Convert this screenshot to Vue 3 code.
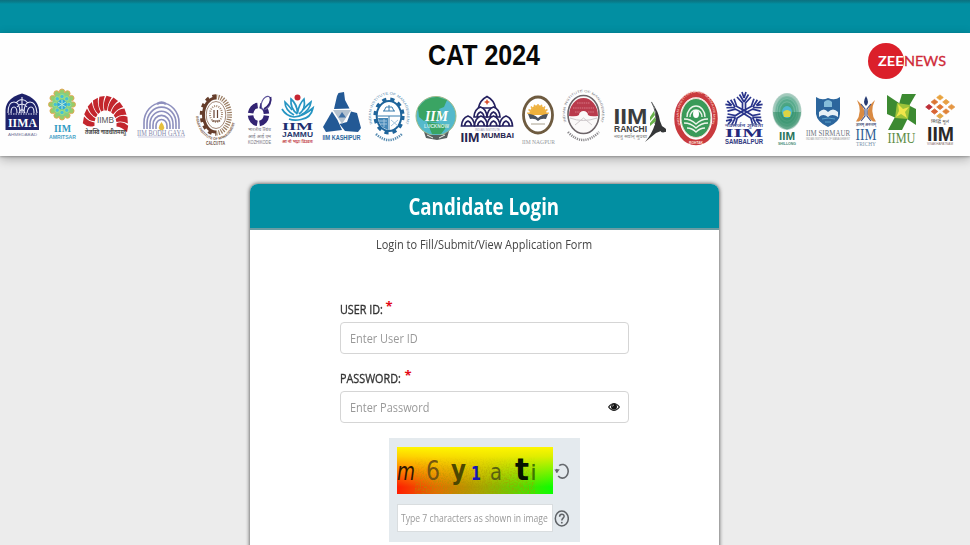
<template>
  <div class="page">
    <div class="topbar"></div>

    <header class="banner">
      <h1 class="exam">
        <svg width="114" height="38" viewBox="427 36 114 38">
          <text x="428" y="65" textLength="112" lengthAdjust="spacingAndGlyphs">CAT 2024</text>
        </svg>
      </h1>

      <svg class="zee" width="82" height="38" viewBox="866 42 82 38">
        <circle cx="886" cy="61" r="18" fill="#db1f2a" />
        <text x="878" y="66" textLength="25.500" lengthAdjust="spacingAndGlyphs" fill="#fff" font-weight="700">ZEE</text>
        <text x="904" y="66" textLength="42" lengthAdjust="spacingAndGlyphs" fill="#cf2a38" stroke="#cf2a38" stroke-width=".3">NEWS</text>
      </svg>

      <svg class="logos" width="970" height="66" viewBox="0 88 970 66">
        <defs>
          <path id="arc-calcutta" d="M196 116 C198 148 234 148 236 116" />
          <path id="arc-emblem" d="M372.500 124 A18 21 0 1 1 405.500 124" />
          <path id="arc-raipur" d="M566.500 122 A18.500 21.500 0 1 1 600.500 122" />
          <path id="arc-rohtak" d="M680.500 125 A17.300 22.300 0 1 1 711.500 125" />
          <radialGradient id="glow"><stop stop-color="#2f9a72" /><stop offset=".7" stop-color="#5fae92" /><stop offset="1" stop-color="#b9d3ca" /></radialGradient>
        </defs>

        <!-- Ahmedabad -->
        <path d="M5.500 130V110Q6 98 22 93.500Q38 98 39 110V130Z" fill="#1d2169" />
        <g fill="none" stroke="#e9ebf7" stroke-width="1.100">
          <path d="M8 113Q8 102 14 102T20 113M24 113Q24 102 30 102T37 113M16 103Q22 96 28 103M11 113Q11 107 14 107T17 113M27 113Q28 107 31 107T34 113M22 97V113M17 107Q22 101 27 107M19 113Q22 106 25 113" />
          <path d="M8 114H37" stroke-dasharray="1.500 1" />
        </g>

        <!-- Amritsar -->
        <circle v-for="p in ring(62, 104.5, 10.8, 12.8, 12)" :key="'a' + p.a" :cx="p.x" :cy="p.y" r="2.700" fill="#9acb68" stroke="#e7a653" stroke-width=".9" />
        <ellipse cx="62" cy="104.500" rx="10" ry="12" fill="#82cf85" />
        <circle v-for="p in ring(62, 104.5, 6.7, 8, 8)" :key="'b' + p.a" :cx="p.x" :cy="p.y" r="2.200" fill="#45c1d5" stroke="#bfe56a" stroke-width=".7" />
        <circle cx="62" cy="104.500" r="4.800" fill="#2fa8d8" />
        <path d="M62 100V109M58 102L66 107M66 102L58 107" stroke="#b6ead4" stroke-width="1" />

        <!-- Bangalore -->
        <g fill="#c3262d" transform="translate(0 -33) scale(1 1.270)">
          <path v-for="a in fan" :key="a" d="M94.500 125Q88.500 127 82.800 123L84 117.800Q89 122 94.500 122.400Z" :transform="`rotate(${a} 105.5 124)`" />
        </g>

        <!-- Bodh Gaya -->
        <g fill="none" stroke="#8d8fbd" stroke-width="1.600">
          <path v-for="r in [5.5, 8.5, 11.5, 14.5, 17.5]" :key="r" :d="`M${161.5 - r} 129 V${127 - r * 0.25} A${r} ${r * 1.12} 0 0 1 ${161.5 + r} ${127 - r * 0.25} V129`" />
          <path d="M157 104Q161.500 101 166 104" stroke-width="2.500" />
        </g>
        <path d="M161.500 122Q167 129 161.500 130.500Q156 129 161.500 122Z" fill="#e5bf3e" />
        <path d="M138 137H185" stroke="#a9aacc" stroke-width=".6" />

        <!-- Calcutta -->
        <g fill="none">
          <path d="M216 98A12.500 17 0 0 0 216 132" stroke="#653d2b" stroke-width="3" />
          <path d="M216 96A14.500 19 0 0 0 216 134" stroke="#653d2b" stroke-width="3.500" stroke-dasharray="3.700 3.700" />
          <path d="M216 97A13.500 18 0 0 1 216 133" stroke="#9a7d63" stroke-width="5" stroke-dasharray="1.200 1.200" />
          <ellipse cx="216" cy="115" rx="9.800" ry="13.500" stroke="#8b6a54" stroke-width=".8" />
          <ellipse cx="216" cy="114" rx="6" ry="8" stroke="#a68a74" stroke-width="2" stroke-dasharray="1 1.200" />
          <path d="M214 110V118M217.500 110V118M212 121H220" stroke="#694434" stroke-width="1.200" />
        </g>
        <text font-size="3.700" fill="#775747" font-weight="700"><textPath href="#arc-calcutta" textLength="62" lengthAdjust="spacingAndGlyphs">INDIAN INSTITUTE OF MANAGEMENT</textPath></text>

        <!-- Kozhikode -->
        <ellipse cx="258.500" cy="114.500" rx="8" ry="9" fill="none" stroke="#332473" stroke-width="5.500" stroke-dasharray="11 2.350" stroke-dashoffset="-1.200" />
        <ellipse cx="266" cy="103" rx="4.200" ry="7" fill="#fff" stroke="#5e559a" stroke-width="1.100" transform="rotate(24 266 103)" />
        <path d="M270.500 97Q272 104 264 109" fill="none" stroke="#332473" stroke-width="1.800" />

        <!-- Jammu -->
        <circle cx="297.500" cy="97.500" r="3" fill="#c72632" />
        <g fill="none" stroke="#2695c2" stroke-width="1.700">
          <path d="M297.500 114Q290 109 291 99Q297 104 297.500 113Q299 104 304 99Q306 109 299 114" />
          <path d="M294 115Q285 110 285 102Q290 107 292 110M301 115Q310 110 311 102Q305 107 303 110" />
          <path d="M282 109Q286 116 294 117Q304 116 313 108Q311 118 301 119.500Q294 121 289 119" />
        </g>

        <!-- Kashipur -->
        <g fill="#235995">
          <path d="M337 96L338.500 93L344 92L345 100L349.500 108.500L334 109Z" />
          <path d="M332 111.500L337.500 120L342 130L326 132L323 127Z" />
          <path d="M351 111.500L357 113L361 128L358 132L345 131L339.500 124L347 122Z" />
        </g>
        <path d="M333 110H351L342 124Z" fill="#b4c2cf" />
        <path d="M338.500 117.500L342 112L346 117.500Z" fill="#3f70a5" />

        <!-- Gear emblem -->
        <ellipse cx="389" cy="116" rx="12.300" ry="15" fill="#fff" stroke="#1f659b" stroke-width="2" />
        <ellipse cx="389" cy="116" rx="13.900" ry="16.800" fill="none" stroke="#1f659b" stroke-width="3.400" stroke-dasharray="4.100 4.050" />
        <path d="M377 116H401M389 116V130M383 111H395M389 105V111M386 107L392 107M384 111L386 107M394 111L392 107" fill="none" stroke="#387cae" stroke-width="1" />
        <path d="M378 118H388V130Q379 127 378 118Z" fill="#4587b7" />
        <path d="M379 121H387M380 124H387M384 119V127M391 120L398 126M398 120L391 126" stroke="#a3c5de" stroke-width="1" />
        <text font-size="3.500" fill="#548ab0"><textPath href="#arc-emblem" textLength="78" lengthAdjust="spacingAndGlyphs">INDIAN INSTITUTE OF MANAGEMENT</textPath></text>
        <path d="M376 134Q389 146 402 134" fill="none" stroke="#548ab0" stroke-width="2.500" stroke-dasharray="1.300 1" />

        <!-- Lucknow -->
        <ellipse cx="436" cy="116" rx="20" ry="19.500" fill="#54b9cb" stroke="#a0b983" stroke-width="1" />
        <path d="M418 108Q426 96 438 97L447 100L444 107L439 109L443 116L436 122L424 121L419 117ZM427 122L448 125L441 134L432 134Z" fill="#3aa463" />
        <path d="M424 132L430 135H443L449 131L447 138L437 140L426 138Z" fill="#596160" />
        <path d="M427 135L433 138M445 135L439 138" stroke="#edf1ed" stroke-width="1" />

        <!-- Mumbai -->
        <g fill="#fff" stroke="#25215f" stroke-width="1.700">
          <path d="M478.500 108Q480 100 487 96.500Q494 100 495.500 108Z" />
          <path v-for="p in scales" :key="p.x + '-' + p.y" :d="`M${p.x - 6.5} ${p.y}Q${p.x - 6} ${p.y - 8} ${p.x} ${p.y - 10}Q${p.x + 6} ${p.y - 8} ${p.x + 6.5} ${p.y}ZM${p.x - 3.5} ${p.y}Q${p.x - 3} ${p.y - 4} ${p.x} ${p.y - 5}Q${p.x + 3} ${p.y - 4} ${p.x + 3.5} ${p.y}`" />
        </g>
        <path d="M487 99L488 101L490 102L488 103L487 105L486 103L484 102L486 101Z" fill="#d95230" />

        <!-- Nagpur -->
        <ellipse cx="538" cy="115" rx="14.500" ry="18" fill="#fff" stroke="#6e5b40" stroke-width="2.800" />
        <path d="M529 115A9 10 0 0 1 547 115Z" fill="#eeb13d" />
        <g stroke="#f0b54a" stroke-width="1.500">
          <path v-for="a in rays" :key="a" d="M527 115H530.500" :transform="`rotate(${a} 538 115)`" />
        </g>
        <path d="M528 114Q534 114 538 118Q542 114 548 114L546 119Q541 118 538 121Q535 118 530 119Z" fill="#4c535f" />
        <path d="M531 124H545" stroke="#a8a08d" stroke-width="1" />

        <!-- Raipur -->
        <ellipse cx="583.500" cy="114.500" rx="15.500" ry="19" fill="#fbf9f9" stroke="#6c6468" stroke-width="1.600" />
        <path d="M569 116A14.500 18 0 0 1 598 116Q590 117 588 115A4.500 4 0 0 0 579 115Q577 117 569 116Z" fill="#b93a4c" />
        <path d="M573 108H594M575 112H580M588 112H594M577 103H590" stroke="#de8995" stroke-width=".8" stroke-dasharray="1.500 .7" />
        <path d="M570 118Q583 123 597 118M575 125L583.500 118L592 125" fill="none" stroke="#cfc9cc" stroke-width="1" />
        <text font-size="3.300" fill="#77777b"><textPath href="#arc-raipur" textLength="80" lengthAdjust="spacingAndGlyphs">INDIAN INSTITUTE OF MANAGEMENT</textPath></text>
        <path d="M568 132Q583 148 599 132" fill="none" stroke="#8a888c" stroke-width="2.500" stroke-dasharray="1.200 1" />

        <!-- Ranchi -->
        <path d="M651 101Q658 112 655 124Q652 134 645 142L656 133L661 131L666 132V129L662 126L660 121Q659 112 651 101Z" fill="#353738" />
        <path d="M651 101Q658 112 655 124L647 138Q654 122 651 101Z" fill="#fff" />
        <path d="M651.500 102Q657.500 113 655 124" fill="none" stroke="#353738" stroke-width=".8" />
        <circle cx="663" cy="130" r="2.500" fill="#353738" />
        <path d="M654 111L650 117V121L655 115ZM655 117L650 123V126L656 121Z" fill="#68b24a" />

        <!-- Rohtak -->
        <ellipse cx="696" cy="118.500" rx="19" ry="24" fill="#fff" stroke="#c93a3e" stroke-width="5.500" />
        <ellipse cx="696" cy="118" rx="15" ry="19.500" fill="#3a9a59" stroke="#f0d9cd" stroke-width="1" />
        <g fill="none" stroke="#edf5ec" stroke-width="1.400">
          <path d="M687 117A9 11 0 0 1 705 117M690 117A6 7 0 0 1 702 117" />
          <path d="M684 119Q691 119 696 124Q701 119 708 119M684 123Q691 123 696 128Q701 123 708 123M687 128Q692 128 696 132Q700 128 705 128" />
        </g>
        <ellipse cx="696" cy="114" rx="3" ry="4" fill="#fff" />
        <text font-size="3" fill="#f0b0a8" font-weight="700"><textPath href="#arc-rohtak" textLength="84" lengthAdjust="spacingAndGlyphs">INDIAN INSTITUTE OF MANAGEMENT</textPath></text>

        <!-- Sambalpur -->
        <g fill="none" stroke="#29348b" stroke-width="1.700">
          <g v-for="a in [0, 62, 122, 238, 298]" :key="a" :transform="`translate(744 112) rotate(${a})`">
            <path d="M-1.500 0V-9L-7 -15M1.500 0V-9L7 -15M0 -10L-4.500 -17.500M0 -10L4.500 -17.500M0 -14L-2 -20M0 -14L2 -20" />
          </g>
        </g>

        <!-- Shillong -->
        <ellipse cx="787" cy="111.500" rx="14.500" ry="18.500" fill="url(#glow)" />
        <g fill="none" stroke="#cde2da" stroke-width=".3">
          <ellipse v-for="r in [7.5, 10, 12.5]" :key="r" cx="787" cy="111.500" :rx="r" :ry="r * 1.3" />
        </g>
        <path d="M773 112H801Q800 126 787 129.500Q774 126 773 112Z" fill="#2d8b62" opacity=".55" />
        <ellipse cx="787" cy="112" rx="5" ry="6" fill="#50b9cf" />
        <path d="M783 112Q787 108 791 112L790 117H784Z" fill="#ddd343" />

        <!-- Sirmaur -->
        <path d="M816 97Q822 101 828 98Q835 101 840 97V114Q840 122 828 127Q817 122 816 114Z" fill="#2c669d" />
        <path d="M824 102Q828 98 832 102V107H824Z" fill="#85bdda" />
        <path d="M819 112Q824 107 828 112Q833 107 838 112V117Q832 113 828 117Q823 113 819 117Z" fill="#e7f1f6" />
        <path d="M822 119Q828 117 835 119M825 122H831" fill="none" stroke="#5aa1c9" />

        <!-- Tiruchirappalli -->
        <path d="M866 96Q870 103 866 106Q862 103 866 96Z" fill="#263b72" />
        <path d="M857 100Q865 107 864.500 114Q863 119 859 121.500H856Q863 112 857 100ZM875 100Q867 107 867.500 114Q869 119 873 121.500H876Q869 112 875 100Z" fill="#d98a42" />
        <path d="M861 104L865 109V116L861 121M871 104L867 109V116L871 121" fill="none" stroke="#3e4f84" stroke-width="1.100" />

        <!-- Udaipur -->
        <g fill="#3c8a31">
          <path d="M899 104L902 94H916L909 106Z" />
          <path d="M887 95L899 103L896 118L887 114Z" />
          <path d="M908 105L916 109V125L907 119Z" />
          <path d="M895 117L908 118L902 130H888Z" />
        </g>
        <path d="M897 103L910 105L908 119L895 118Z" fill="#9cc43a" />
        <path d="M898 104L903 109L909 107L905 112L907 118L901 114L896 117L899 111Z" fill="#f0e64a" />

        <!-- Visakhapatnam -->
        <path v-for="d in diamonds" :key="d.x + '-' + d.y" :d="`M${d.x - 3.3} ${d.y}L${d.x} ${d.y - 2.6}L${d.x + 3.3} ${d.y}L${d.x} ${d.y + 2.6}Z`" :fill="d.c" :stroke="d.c" stroke-width=".8" stroke-linejoin="round" />

        <text
          v-for="(l, i) in labels"
          :key="i"
          :x="l.x"
          :y="l.y"
          :textLength="l.w"
          :font-size="l.s"
          :fill="l.c"
          :font-weight="l.b ? 700 : 400"
          :class="l.f"
          lengthAdjust="spacingAndGlyphs"
        >{{ l.t }}</text>
      </svg>
    </header>

    <main class="panel">
      <h2 class="panel-title"><span>Candidate Login</span></h2>
      <p class="lead"><span>Login to Fill/Submit/View Application Form</span></p>

      <form class="form" @submit.prevent>
        <label class="label"><span>USER ID:</span><b>*</b></label>
        <div class="field"><input v-model="userId" type="text" placeholder="Enter User ID" /></div>

        <label class="label"><span class="pw">PASSWORD:</span><b>*</b></label>
        <div class="field">
          <input v-model="password" :type="visible ? 'text' : 'password'" placeholder="Enter Password" />
          <svg class="eye" width="12" height="10" viewBox="0 0 12 10" @click="visible = !visible">
            <path d="M.6 5Q6-2 11.400 5Q6 12 .6 5Z" fill="#fff" stroke="#222" stroke-width="1.200" />
            <circle cx="6" cy="4.700" r="3" fill="#151515" />
            <path d="M4.500 4.500Q4.500 3 6 3" fill="none" stroke="#bbb" stroke-width=".8" />
          </svg>
        </div>

        <div class="captcha">
          <svg class="captcha-image" width="156" height="47" viewBox="0 0 156 47">
            <defs>
              <linearGradient id="base"><stop stop-color="#ff1e00" /><stop offset=".25" stop-color="#e56c00" /><stop offset=".55" stop-color="#a5a800" /><stop offset=".8" stop-color="#55dc00" /><stop offset="1" stop-color="#0cff00" /></linearGradient>
              <linearGradient id="sun" x2="0" y2="1"><stop stop-color="#fff600" /><stop offset=".2" stop-color="#ffee00" stop-opacity=".85" /><stop offset=".85" stop-color="#ffe600" stop-opacity="0" /></linearGradient>
              <filter id="grain" x="0" y="0" width="100%" height="100%">
                <feTurbulence type="fractalNoise" baseFrequency=".65" numOctaves="2" seed="4" />
                <feColorMatrix values="0 0 0 0 .4  0 0 0 0 .3  0 0 0 0 0  3.500 0 0 0 -1.500" />
              </filter>
              <linearGradient id="fade" x2="0" y2="1"><stop offset=".2" stop-color="#000" /><stop offset=".7" stop-color="#fff" /></linearGradient>
              <mask id="low"><rect width="156" height="47" fill="url(#fade)" /></mask>
            </defs>
            <rect width="156" height="47" fill="url(#base)" />
            <rect width="156" height="47" fill="url(#sun)" />
            <g mask="url(#low)"><rect x="18" width="120" height="47" filter="url(#grain)" opacity=".5" /></g>
            <text
              v-for="g in glyphs"
              :key="g.t"
              :x="g.x"
              :y="g.y"
              :textLength="g.w"
              :font-size="g.s"
              :fill="g.c"
              :font-weight="g.b ? 700 : 400"
              :font-style="g.i ? 'italic' : 'normal'"
              lengthAdjust="spacingAndGlyphs"
            >{{ g.t }}</text>
          </svg>
          <svg width="16" height="18" viewBox="0 0 16 18">
            <path d="M6.200 3.600A5.800 6.800 0 1 1 5.200 14M3.800 10.500A6 7 0 0 1 4 7" fill="none" stroke="#65696d" stroke-width="1.600" />
            <path d="M1.300 7.500L4 11L6.800 7.200Z" fill="#65696d" />
          </svg>
          <div class="code"><input v-model="code" type="text" placeholder="Type 7 characters as shown in image" /></div>
          <svg width="16" height="18" viewBox="0 0 16 18">
            <ellipse cx="8.800" cy="9.500" rx="6.500" ry="7.500" fill="none" stroke="#5f6367" stroke-width="1.500" />
            <path d="M6.600 7.700C6.600 4.200 11.300 4.400 11.100 7.500C10.900 9.200 8.800 9.300 8.800 11.500" fill="none" stroke="#5f6367" stroke-width="1.500" />
            <circle cx="8.800" cy="13.700" r=".9" fill="#5f6367" />
          </svg>
        </div>
      </form>
    </main>
  </div>
</template>

<script setup>
import { ref } from 'vue'

const userId = ref('')
const password = ref('')
const code = ref('')
const visible = ref(false)

// evenly spaced points on an ellipse
function ring(cx, cy, rx, ry, n) {
  return Array.from({ length: n }, (_, i) => {
    const a = (i / n) * Math.PI * 2
    return { a: i, x: cx + rx * Math.cos(a), y: cy + ry * Math.sin(a) }
  })
}

const fan = Array.from({ length: 11 }, (_, i) => i * 18)
const rays = [10, 30, 50, 70, 90, 110, 130, 150, 170]

const scales = [
  { x: 480.5, y: 117 },
  { x: 493.5, y: 117 },
  { x: 468, y: 126 },
  { x: 481, y: 126 },
  { x: 493.5, y: 126 },
  { x: 506, y: 126 }
]

const diamonds = [
  { x: 940, y: 97.5, c: '#e8a23d' },
  { x: 934.5, y: 102, c: '#db7433' },
  { x: 946, y: 102, c: '#e7a044' },
  { x: 929, y: 107, c: '#bd2f37' },
  { x: 940, y: 107, c: '#df7833' },
  { x: 951.5, y: 107, c: '#e49643' },
  { x: 934.5, y: 111.5, c: '#d86434' },
  { x: 946, y: 111.5, c: '#df8338' },
  { x: 940, y: 116, c: '#e1a747' }
]

const labels = [
  { t: 'IIMA', x: 8, y: 126.5, w: 29, s: 13, c: '#fff', b: true, f: 'slab' },
  { t: 'AHMEDABAD', x: 8, y: 135.5, w: 29, s: 3.5, c: '#777a9d' },
  { t: 'IIM', x: 54, y: 131.5, w: 17, s: 11, c: '#319ac2', b: true, f: 'slab' },
  { t: 'AMRITSAR', x: 49, y: 138.5, w: 27, s: 6, c: '#49a3c7', b: true },
  { t: 'IIMB', x: 97, y: 123, w: 17, s: 9, c: '#555', f: 'sans' },
  { t: 'तेजस्वि नावधीतमस्तु', x: 85, y: 134, w: 41, s: 7, c: '#444', b: true },
  { t: 'IIM BODH GAYA', x: 137, y: 135.5, w: 48, s: 7.5, c: '#888caf', f: 'slab' },
  { t: 'CALCUTTA', x: 206, y: 145, w: 19, s: 4.5, c: '#684b3b', b: true },
  { t: 'भारतीय प्रबंध', x: 248, y: 130.5, w: 23, s: 5, c: '#777580' },
  { t: 'आई आई एम', x: 248, y: 137.5, w: 23, s: 5, c: '#777580' },
  { t: 'KOZHIKODE', x: 248, y: 144, w: 23, s: 5, c: '#777580' },
  { t: 'IIM', x: 282, y: 129.5, w: 31, s: 10, c: '#202e70', b: true, f: 'slab' },
  { t: 'JAMMU', x: 282, y: 136.7, w: 31, s: 7, c: '#27386e', b: true },
  { t: 'आ नो भद्राः विश्वतः', x: 282, y: 142.5, w: 31, s: 5, c: '#c44a50', b: true },
  { t: 'IIM KASHIPUR', x: 322.5, y: 139.5, w: 38, s: 7, c: '#2b659c', b: true },
  { t: 'IIM', x: 425, y: 121, w: 23, s: 15, c: '#fff', b: true, f: 'slant' },
  { t: 'LUCKNOW', x: 424, y: 127.5, w: 25, s: 5.5, c: '#d5eee9', b: true },
  { t: 'INDIAN INSTITUTE', x: 475, y: 130.5, w: 25, s: 3.5, c: '#8c8aaa' },
  { t: 'IIM', x: 460.5, y: 142, w: 19, s: 12, c: '#26244f', b: true },
  { t: 'MUMBAI', x: 481, y: 138, w: 33, s: 7, c: '#26244f', b: true },
  { t: 'IIM NAGPUR', x: 522, y: 143.5, w: 33, s: 6.5, c: '#94979a', f: 'slab' },
  { t: 'IIM', x: 613.5, y: 123.5, w: 34, s: 22, c: '#3b3c3d', b: true },
  { t: 'RANCHI', x: 614, y: 132, w: 33, s: 8.5, c: '#3b3c3d', b: true },
  { t: 'नयतु सर्वान् सुपथा', x: 614, y: 138, w: 33, s: 4.5, c: '#777' },
  { t: 'ROHTAK', x: 689, y: 143.5, w: 14, s: 4, c: '#ffe7df', b: true },
  { t: 'नवसर्जन शुचिता', x: 725, y: 127, w: 38, s: 4.5, c: '#59619d', b: true },
  { t: 'IIM', x: 725, y: 136.7, w: 38, s: 12, c: '#242a7d', b: true, f: 'slab' },
  { t: 'SAMBALPUR', x: 725, y: 143.5, w: 38, s: 7, c: '#32397f', b: true },
  { t: 'IIM', x: 779, y: 140, w: 16, s: 10, c: '#28745b', b: true },
  { t: 'SHILLONG', x: 778, y: 144.5, w: 18, s: 3.5, c: '#438a71', b: true },
  { t: 'IIM SIRMAUR', x: 806, y: 135.5, w: 44, s: 7.5, c: '#6f7580', f: 'slab' },
  { t: 'INDIAN INSTITUTE OF MANAGEMENT', x: 806, y: 139.5, w: 44, s: 3, c: '#999' },
  { t: 'ज्ञानम् अनन्तम्', x: 856, y: 125.5, w: 20, s: 4, c: '#575d82', b: true },
  { t: 'IIM', x: 855.5, y: 140, w: 21, s: 17, c: '#315f93', f: 'slab' },
  { t: 'TRICHY', x: 856, y: 146, w: 20, s: 5.5, c: '#7891aa', f: 'slab' },
  { t: 'IIMU', x: 887.5, y: 142.5, w: 28, s: 15.5, c: '#5a8b42', f: 'slab' },
  { t: 'सिद्धि मूलं', x: 931, y: 122.5, w: 18, s: 4, c: '#555' },
  { t: 'IIM', x: 927, y: 140.5, w: 27, s: 21, c: '#292827', b: true },
  { t: 'VISAKHAPATNAM', x: 927, y: 145, w: 26, s: 3.5, c: '#8c7370' }
]

const glyphs = [
  { t: 'm', x: 0, y: 32.5, w: 18, s: 24, c: '#2e1600', i: true },
  { t: '6', x: 29, y: 32.5, w: 14, s: 26, c: '#75550f' },
  { t: 'y', x: 54, y: 32, w: 15, s: 26, c: '#4b4700', b: true },
  { t: '1', x: 74, y: 32.5, w: 10, s: 19, c: '#1517b5', b: true },
  { t: 'a', x: 93, y: 32.5, w: 12, s: 23, c: '#59620f' },
  { t: 't', x: 118, y: 33, w: 14, s: 31, c: '#071400', b: true },
  { t: 'i', x: 133, y: 32.5, w: 7, s: 21, c: '#3d7700' }
]
</script>

<style>
html,
body {
  overflow: hidden;
}
</style>

<style scoped>
.page {
  width: 970px;
  height: 545px;
  overflow: hidden;
  display: flex;
  flex-direction: column;
  align-items: center;
  background: #ececec;
  color: #444;
  font-family: 'Open Sans', sans-serif;
}

.topbar {
  width: 100%;
  height: 33px;
  flex: none;
  background: linear-gradient(#0d7080 0, #087d8c 2px, #028fa2 4px);
}

/* ── Banner ── */
.banner {
  position: relative;
  width: 100%;
  height: 123px;
  flex: none;
  background: #fefefe;
  box-shadow: 0 1px 2px rgba(0, 0, 0, 0.25), 0 3px 10px rgba(0, 0, 0, 0.28);
}

.exam {
  margin: 0;
  padding: 3px 0 0 427px;
  height: 52px;
}

.exam svg {
  display: block;
}

.exam text {
  font: bold 29px 'Liberation Sans', sans-serif;
  fill: #080808;
}

.zee {
  position: absolute;
  top: 9px;
  right: 22px;
  font: 14px Lato, sans-serif;
}

.logos {
  display: block;
  font-family: 'Liberation Sans', 'Noto Sans', sans-serif;
}

.slab {
  font-family: 'Liberation Serif', serif;
}

.slant {
  font-family: 'Liberation Serif', serif;
  font-style: italic;
}

/* ── Login panel ── */
.panel {
  width: 469px;
  height: 400px;
  flex: none;
  margin: 28px 2px 0 0;
  border-radius: 8px 8px 0 0;
  background: #fff;
  box-shadow: 0 0 4px rgba(0, 0, 0, 0.75);
}

.panel-title {
  margin: 0;
  height: 46px;
  border-bottom: 2px solid #6a9ca3;
  box-sizing: border-box;
  border-radius: 8px 8px 0 0;
  background: #028fa2;
  color: #fff;
  font-size: 22.5px;
  line-height: 45px;
  text-align: center;
}

.panel-title span {
  display: inline-block;
  white-space: nowrap;
  transform: scaleX(0.83);
}

.lead {
  margin: 0;
  padding-top: 4px;
  font-size: 13.3px;
  line-height: 20px;
  text-align: center;
}

.lead span {
  display: inline-block;
  white-space: nowrap;
  transform: scaleX(0.825);
}

.form {
  width: 289px;
  margin: 44px auto 0;
  display: flex;
  flex-direction: column;
}

.label {
  display: flex;
  height: 24px;
  font-size: 13px;
  line-height: 23px;
  color: #333;
  -webkit-text-stroke: 0.35px #333;
}

.label span {
  width: 44px;
  white-space: nowrap;
  transform: scaleX(0.83);
  transform-origin: left;
}

.label .pw {
  width: 63px;
}

.label b {
  margin-left: 2px;
  line-height: 17px;
  font-size: 13px;
  color: #e30b17;
  -webkit-text-stroke: 0;
}

.field {
  display: flex;
  align-items: center;
  height: 32px;
  margin-bottom: 13px;
  padding: 0 8px 0 9px;
  box-sizing: border-box;
  border: 1px solid #d5d5d5;
  border-radius: 4px;
}

input {
  border: 0;
  outline: 0;
  padding: 0;
  background: transparent;
  font: 13px 'Open Sans', sans-serif;
  transform: scaleX(0.84);
  transform-origin: left;
}

input::placeholder {
  color: #999;
  opacity: 1;
}

.field input {
  width: 258px;
  flex: none;
}

.eye {
  margin-left: auto;
}

/* ── Captcha ── */
.captcha {
  align-self: center;
  width: 191px;
  height: 104px;
  margin-top: 2px;
  padding: 9px 10px 10px 8px;
  box-sizing: border-box;
  display: grid;
  grid-template-columns: 156px 16px;
  grid-template-rows: 47px 28px;
  gap: 10px 0;
  align-items: center;
  background: #e4eaee;
}

.captcha-image {
  font-family: 'DejaVu Sans', sans-serif;
}

.code {
  height: 28px;
  padding-left: 3px;
  box-sizing: border-box;
  border: 1px solid #d9dddf;
  background: #fff;
  overflow: hidden;
}

.code input {
  width: 174px;
  height: 26px;
  font-size: 10px;
  transform: scaleX(0.86);
}
</style>
